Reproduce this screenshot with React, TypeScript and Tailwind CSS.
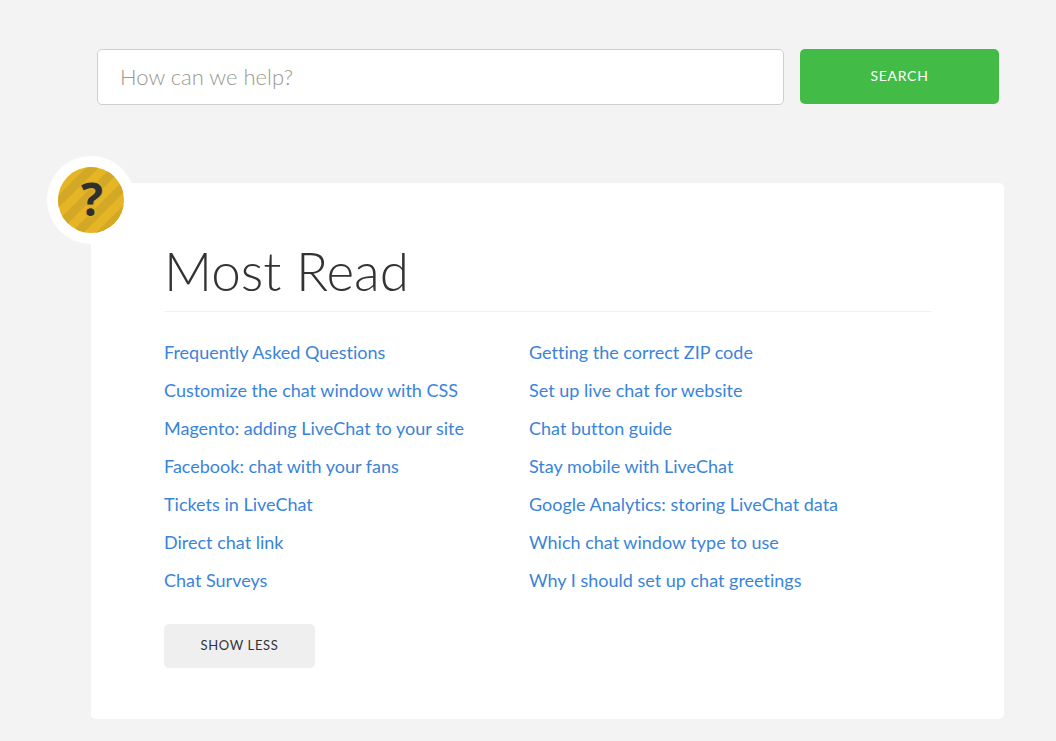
import { useState } from 'react'

const leftLinks = [
  'Frequently Asked Questions',
  'Customize the chat window with CSS',
  'Magento: adding LiveChat to your site',
  'Facebook: chat with your fans',
  'Tickets in LiveChat',
  'Direct chat link',
  'Chat Surveys',
]

const rightLinks = [
  'Getting the correct ZIP code',
  'Set up live chat for website',
  'Chat button guide',
  'Stay mobile with LiveChat',
  'Google Analytics: storing LiveChat data',
  'Which chat window type to use',
  'Why I should set up chat greetings',
]

function LinkList({ items }: { items: string[] }) {
  return (
    <ul>
      {items.map((item) => (
        <li key={item} className="text-lg leading-[38px]">
          <a href="#" className="text-[#3a84d8] hover:underline">
            {item}
          </a>
        </li>
      ))}
    </ul>
  )
}

function QuestionBadge() {
  return (
    <div className="absolute -top-[27px] -left-11 rounded-full bg-white p-[11px]">
      <svg viewBox="0 0 66 66" className="size-[66px]" aria-hidden="true">
        <defs>
          <clipPath id="badge-circle">
            <circle cx="33" cy="33" r="33" />
          </clipPath>
        </defs>
        <g clipPath="url(#badge-circle)">
          <rect width="66" height="66" fill="#e6b526" />
          <path
            d="M-10 45 45 -10M-10 70 70 -10M-5 90 90 -5M20 90 90 20"
            stroke="#d3a827"
            strokeWidth="9"
          />
        </g>
        <text
          x="34"
          y="49"
          textAnchor="middle"
          className="fill-[#2f2f2f] stroke-[#dcae26] font-['Open_Sans',sans-serif] text-[46px] font-bold [paint-order:stroke]"
          strokeWidth="3"
        >
          ?
        </text>
      </svg>
    </div>
  )
}

export default function App() {
  const [showAll, setShowAll] = useState(true)
  const count = showAll ? 7 : 3

  return (
    <div className="min-h-screen bg-[#f3f3f3] pt-[49px] pr-[52px] pb-[22px] pl-[91px] font-['Lato',sans-serif] text-[#333] [font-variant-ligatures:none]">
      <form className="flex items-start gap-4 pr-[5px] pl-1.5" onSubmit={(e) => e.preventDefault()}>
        <input
          type="text"
          aria-label="How can we help?"
          placeholder="How can we help?"
          className="h-14 min-w-0 flex-1 rounded-[5px] border border-[#cfcfcf] bg-white px-[22px] pb-0.5 text-[22px] font-light outline-none placeholder:text-[#98988f]"
        />
        <button type="submit" className="h-[55px] w-[199px] rounded-[5px] bg-[#42bb47] pb-0.5 text-sm tracking-wider text-white">
          SEARCH
        </button>
      </form>

      <section className="relative mt-[78px] rounded-[5px] bg-white pt-14 pr-[72px] pb-[51px] pl-[73px]">
        <QuestionBadge />
        <h1 className="border-b border-[#f2f2f2] pb-2 text-[53px] leading-[64px] font-light">Most Read</h1>
        <div className="mt-[21px] grid grid-cols-[365fr_403fr]">
          <LinkList items={leftLinks.slice(0, count)} />
          <LinkList items={rightLinks.slice(0, count)} />
        </div>
        <button
          type="button"
          onClick={() => setShowAll(!showAll)}
          className="mt-[25px] h-11 w-[151px] rounded-[5px] bg-[#efefef] text-[13px] tracking-wider"
        >
          {showAll ? 'SHOW LESS' : 'SHOW MORE'}
        </button>
      </section>
    </div>
  )
}
